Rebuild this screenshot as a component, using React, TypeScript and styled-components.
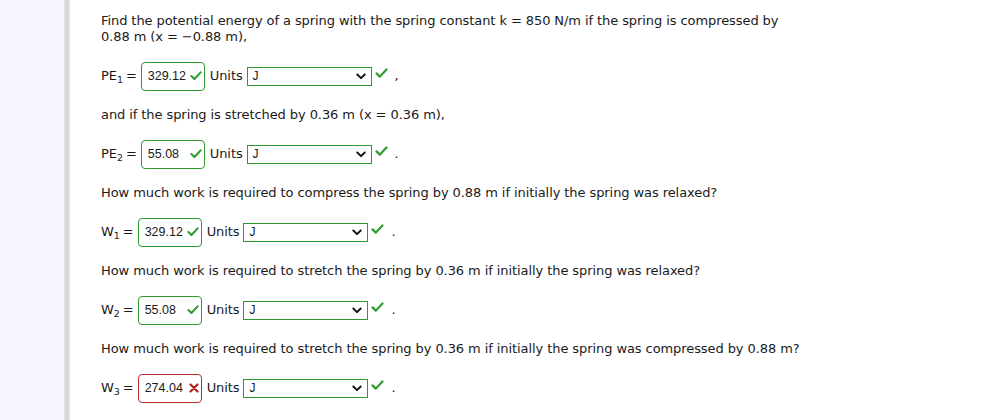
import React from "react";
import styled, { createGlobalStyle } from "styled-components";

const GlobalStyle = createGlobalStyle`
  html, body {
    margin: 0;
    padding: 0;
    background: #ffffff;
  }
  body {
    font-family: "DejaVu Sans", Verdana, sans-serif;
    color: #1a1a1a;
  }
`;

const Page = styled.div`
  display: flex;
  width: 995px;
  height: 420px;
  overflow: hidden;
`;

const Sidebar = styled.div`
  width: 64px;
  flex: none;
  background: #f8f7ff;
`;

const Shade = styled.div`
  width: 6px;
  flex: none;
  background: linear-gradient(to right, #e4e4ea, #d2d2d8 60%, #ececf0);
`;

const Main = styled.div`
  flex: 1;
  padding: 13px 0 0 31px;
  display: flex;
  flex-direction: column;
  gap: 16px;
  font-size: 13px;
  line-height: 16px;
  letter-spacing: -0.08px;
`;

const Text = styled.p`
  margin: 0;
  max-width: 700px;
`;

const Row = styled.div`
  display: flex;
  align-items: center;
  height: 30px;
  white-space: nowrap;
`;

const Label = styled.span`
  margin-right: 4px;
  sub {
    font-size: 9.5px;
    vertical-align: -3px;
    line-height: 0;
    margin-right: -1px;
  }
`;

const AnswerBox = styled.div<{ $wrong?: boolean }>`
  box-sizing: border-box;
  width: 64px;
  height: 29px;
  border: 1px solid ${(p) => (p.$wrong ? "#b92d2a" : "#2c9a2c")};
  border-radius: 4px;
  display: flex;
  align-items: center;
  justify-content: space-between;
  padding: 0 2px 0 6px;
  font-family: "Liberation Sans", Arial, sans-serif;
  font-size: 12.5px;
  letter-spacing: 0;
  margin-right: 5px;
`;

const UnitsLabel = styled.span`
  margin-right: 4px;
`;

const Select = styled.div`
  box-sizing: border-box;
  width: 125px;
  height: 19px;
  border: 1px solid #2c9a2c;
  display: flex;
  align-items: center;
  justify-content: space-between;
  padding: 0 5px 0 5px;
  font-family: "Liberation Sans", Arial, sans-serif;
  font-size: 12px;
  letter-spacing: 0;
`;

const OuterMark = styled.span`
  display: inline-flex;
  align-self: flex-start;
  margin: 7px 0 0 3px;
`;

const Punct = styled.span`
  margin-left: 7px;
`;

const Check = ({ size = 12 }: { size?: number }) => (
  <svg width={size} height={size * 0.8} viewBox="0 0 12 10">
    <path d="M1.2 5.2 L4.4 8.3 L10.8 1.4" fill="none" stroke="#2c9a2c" strokeWidth="2.1" strokeLinecap="round" strokeLinejoin="round" />
  </svg>
);

const Cross = () => (
  <svg width="10" height="10" viewBox="0 0 10 10">
    <path d="M1.5 1.5 L8.5 8.5 M8.5 1.5 L1.5 8.5" fill="none" stroke="#b8201e" strokeWidth="2.2" strokeLinecap="round" />
  </svg>
);

const Chevron = () => (
  <svg width="10" height="7" viewBox="0 0 10 7">
    <path d="M1.3 1.5 L5 5.2 L8.7 1.5" fill="none" stroke="#111" strokeWidth="1.9" strokeLinecap="round" strokeLinejoin="round" />
  </svg>
);

type Answer = {
  name: string;
  sub: string;
  value: string;
  wrong?: boolean;
  punct: string;
};

const AnswerRow = ({ a }: { a: Answer }) => (
  <Row>
    <Label>
      {a.name}
      <sub>{a.sub}</sub> =
    </Label>
    <AnswerBox $wrong={a.wrong}>
      <span>{a.value}</span>
      {a.wrong ? <Cross /> : <Check />}
    </AnswerBox>
    <UnitsLabel>Units</UnitsLabel>
    <Select>
      <span>J</span>
      <Chevron />
    </Select>
    <OuterMark>
      <Check size={13} />
    </OuterMark>
    <Punct>{a.punct}</Punct>
  </Row>
);

const answers: Answer[] = [
  { name: "PE", sub: "1", value: "329.12", punct: "," },
  { name: "PE", sub: "2", value: "55.08", punct: "." },
  { name: "W", sub: "1", value: "329.12", punct: "." },
  { name: "W", sub: "2", value: "55.08", punct: "." },
  { name: "W", sub: "3", value: "274.04", wrong: true, punct: "." },
];

const questions = [
  "Find the potential energy of a spring with the spring constant k = 850 N/m if the spring is compressed by 0.88 m (x = \u22120.88 m),",
  "and if the spring is stretched by 0.36 m (x = 0.36 m),",
  "How much work is required to compress the spring by 0.88 m if initially the spring was relaxed?",
  "How much work is required to stretch the spring by 0.36 m if initially the spring was relaxed?",
  "How much work is required to stretch the spring by 0.36 m if initially the spring was compressed by 0.88 m?",
];

const App: React.FC = () => {
  return (
    <>
      <GlobalStyle />
      <Page>
        <Sidebar />
        <Shade />
        <Main>
          {questions.map((q, i) => (
            <React.Fragment key={i}>
              <Text>{q}</Text>
              <AnswerRow a={answers[i]} />
            </React.Fragment>
          ))}
        </Main>
      </Page>
    </>
  );
};

export default App;
